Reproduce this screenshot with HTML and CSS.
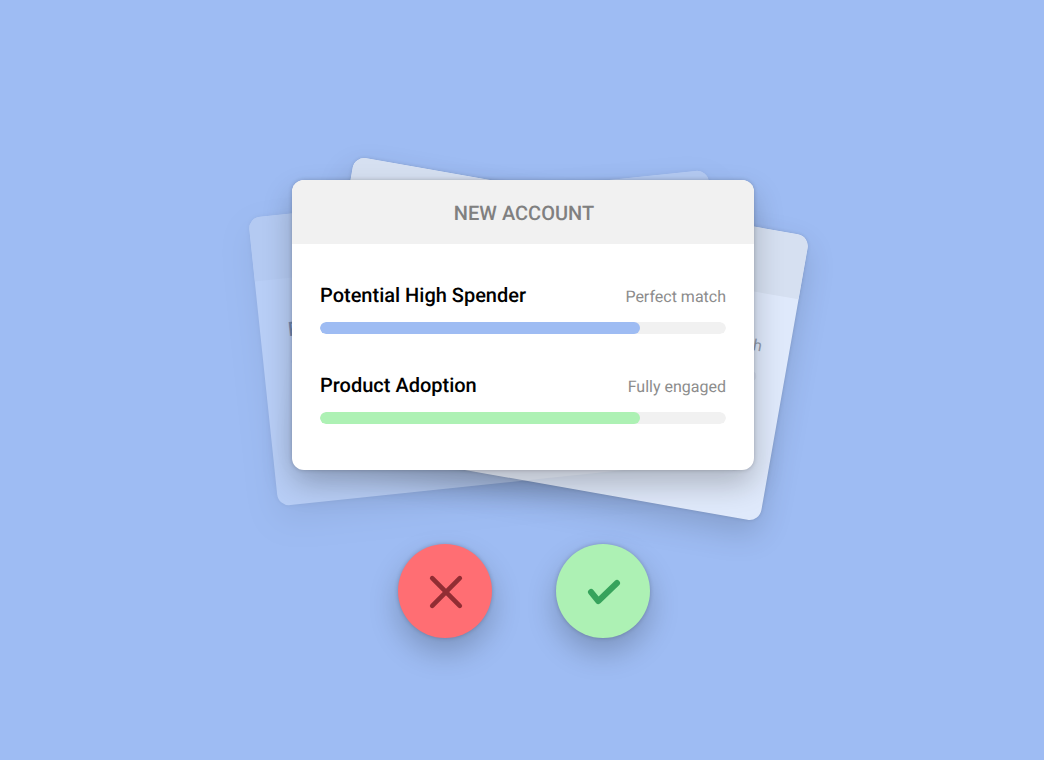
FILE: index.html
```html
<!DOCTYPE html>
<html lang="en">
<head>
<meta charset="utf-8">
<meta name="viewport" content="width=device-width, initial-scale=1">
<title>New account</title>
<link rel="stylesheet" href="styles.css">
</head>
<body>
<main class="page">
  <div class="deck">
    <article class="card card-third" aria-hidden="true">
      <h2 class="card-title">New account</h2>
      <div class="card-body">
        <div class="metric">
          <div class="metric-head"><span class="metric-name">Potential High Spender</span><span class="metric-note">Perfect match</span></div>
          <progress class="meter meter-blue" value="78.8" max="100"></progress>
        </div>
        <div class="metric">
          <div class="metric-head"><span class="metric-name">Product Adoption</span><span class="metric-note">Fully engaged</span></div>
          <progress class="meter meter-green" value="78.8" max="100"></progress>
        </div>
      </div>
    </article>
    <article class="card card-second" aria-hidden="true">
      <h2 class="card-title">New account</h2>
      <div class="card-body">
        <div class="metric">
          <div class="metric-head"><span class="metric-name">Potential High Spender</span><span class="metric-note">Perfect match</span></div>
          <progress class="meter meter-blue" value="78.8" max="100"></progress>
        </div>
        <div class="metric">
          <div class="metric-head"><span class="metric-name">Product Adoption</span><span class="metric-note">Fully engaged</span></div>
          <progress class="meter meter-green" value="78.8" max="100"></progress>
        </div>
      </div>
    </article>
    <article class="card card-front">
      <h2 class="card-title">New account</h2>
      <div class="card-body">
        <div class="metric">
          <div class="metric-head"><label class="metric-name" for="spender">Potential High Spender</label><span class="metric-note">Perfect match</span></div>
          <progress class="meter meter-blue" id="spender" value="78.8" max="100"></progress>
        </div>
        <div class="metric">
          <div class="metric-head"><label class="metric-name" for="adoption">Product Adoption</label><span class="metric-note">Fully engaged</span></div>
          <progress class="meter meter-green" id="adoption" value="78.8" max="100"></progress>
        </div>
      </div>
    </article>
  </div>
  <div class="actions">
    <button class="action action-reject" type="button" aria-label="Reject">
      <svg class="icon" viewBox="0 0 48 48" aria-hidden="true"><path d="M11.2 11.2 38.8 38.8M38.8 11.2 11.2 38.8" stroke-width="4.6"/></svg>
    </button>
    <button class="action action-accept" type="button" aria-label="Accept">
      <svg class="icon" viewBox="0 0 48 48" aria-hidden="true"><path d="M12 25 19.3 34 38 16" stroke-width="6"/></svg>
    </button>
  </div>
</main>
</body>
</html>
```
FILE: styles.css
```css
* {
  box-sizing: border-box;
}

body {
  margin: 0;
  background: #9ebcf3;
  font-family: Roboto, "Liberation Sans", sans-serif;
  text-rendering: geometricPrecision;
}

.page {
  display: flex;
  flex-direction: column;
  align-items: center;
  justify-content: center;
  gap: 74px;
  min-height: 100vh;
  padding: 58px 0 0 2px;
  overflow: hidden;
}

.deck {
  display: grid;
  width: 100%;
  max-width: 462px;
}

.card {
  grid-area: 1 / 1;
  background: #fff;
  border-radius: 12px;
  overflow: hidden;
  box-shadow: 0 0 4px rgba(0, 0, 0, 0.2), 0 14px 30px rgba(0, 0, 0, 0.22);
}

.card-front {
  z-index: 1;
}

.card-second {
  opacity: 0.68;
  transform: translate(34px, 14px) rotate(10deg);
}

.card-third {
  opacity: 0.27;
  transform: translate(-30px, 13px) rotate(-6deg);
}

.card-title {
  margin: 0;
  padding: 21px 0 19px 2px;
  background: #f1f1f1;
  color: #808080;
  font-size: 20px;
  font-weight: 500;
  line-height: 24px;
  text-align: center;
  text-transform: uppercase;
}

.card-body {
  display: grid;
  gap: 38px;
  padding: 38px 28px 46px;
}

.metric {
  display: grid;
  gap: 14px;
}

.metric-head {
  display: flex;
  align-items: baseline;
  justify-content: space-between;
  gap: 16px;
  line-height: 26px;
}

.metric-name {
  color: #000;
  font-size: 20px;
  font-weight: 500;
}

.metric-note {
  color: #8c8c8c;
  font-size: 16px;
  line-height: 20px;
}

.meter {
  appearance: none;
  display: block;
  width: 100%;
  height: 12px;
  border: 0;
  border-radius: 6px;
  overflow: hidden;
}

.meter::-webkit-progress-bar {
  background: #f1f1f1;
  border-radius: 6px;
}

.meter::-webkit-progress-value {
  border-radius: 6px;
}

.meter-blue::-webkit-progress-value {
  background: #9ebcf3;
}

.meter-green::-webkit-progress-value {
  background: #adf1b4;
}

.actions {
  display: flex;
  gap: 64px;
  padding-left: 2px;
}

.action {
  display: grid;
  place-items: center;
  width: 94px;
  height: 94px;
  padding: 0;
  border: 0;
  border-radius: 50%;
  cursor: pointer;
  box-shadow: 0 0 4px rgba(0, 0, 0, 0.2), 0 14px 30px rgba(0, 0, 0, 0.22);
}

.action-reject {
  background: #ff6e73;
  color: #912d33;
}

.action-accept {
  background: #adf1b4;
  color: #37a35c;
}

.icon {
  width: 48px;
  height: 48px;
  fill: none;
  stroke: currentColor;
  stroke-linecap: round;
  stroke-linejoin: round;
}
```
